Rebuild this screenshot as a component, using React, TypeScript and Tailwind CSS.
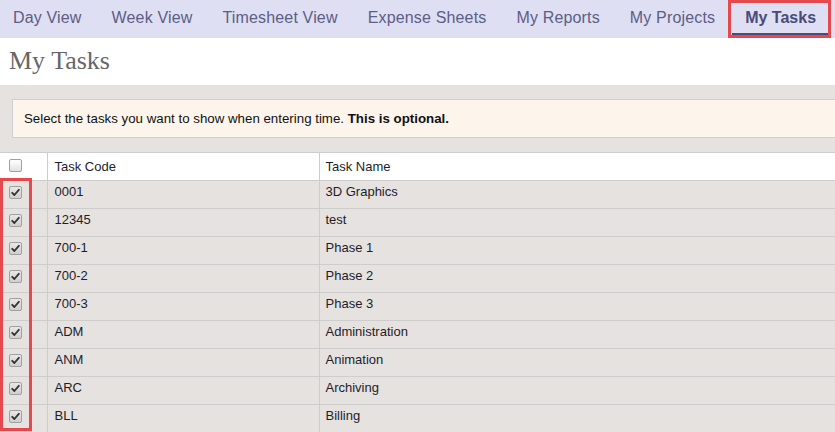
import React from 'react';

const tabs = ['Day View', 'Week View', 'Timesheet View', 'Expense Sheets', 'My Reports', 'My Projects', 'My Tasks'];

const tasks = [
  { code: '0001', name: '3D Graphics' },
  { code: '12345', name: 'test' },
  { code: '700-1', name: 'Phase 1' },
  { code: '700-2', name: 'Phase 2' },
  { code: '700-3', name: 'Phase 3' },
  { code: 'ADM', name: 'Administration' },
  { code: 'ANM', name: 'Animation' },
  { code: 'ARC', name: 'Archiving' },
  { code: 'BLL', name: 'Billing' },
];

function Checkbox({ checked }: { checked: boolean }) {
  return (
    <span
      className={
        'flex h-[13px] w-[13px] items-center justify-center rounded-[2px] border border-[#a0a0a0] ' +
        (checked ? 'bg-gradient-to-b from-[#e8e8e8] to-[#cfcfcf]' : 'bg-gradient-to-b from-[#ffffff] to-[#e2e2e2]')
      }
    >
      {checked && (
        <svg width="9" height="9" viewBox="0 0 9 9">
          <path d="M1.2 4.8 L3.4 7 L7.8 1.8" fill="none" stroke="#333" strokeWidth="1.8" strokeLinecap="round" strokeLinejoin="round" />
        </svg>
      )}
    </span>
  );
}

export default function App() {
  return (
    <div className="relative h-[432px] w-[835px] overflow-hidden bg-[#e6e2df] font-['Liberation_Sans',Arial,sans-serif]">
      {/* top nav */}
      <div className="flex h-[38px] items-stretch bg-[#dedff2] text-[16px] tracking-[0.16px] text-[#5d5d86]">
        <div className="-ml-[2px] flex whitespace-nowrap">
          {tabs.map((t) => {
            const active = t === 'My Tasks';
            return (
              <div
                key={t}
                className={
                  'relative flex shrink-0 items-center pb-[2px] ' +
                  (active ? 'ml-[2px] px-[13px] font-bold tracking-[0px] text-[#4b4a78]' : 'px-[15px]')
                }
              >
                {t}
                {active && (
                  <>
                    <span className="absolute bottom-[2px] left-0 right-0 h-[3px] bg-[#4b4a78]" />
                    <span className="absolute -left-[4px] -right-[2px] top-0 bottom-0 border-[3px] border-[#e5484d]" />
                  </>
                )}
              </div>
            );
          })}
        </div>
      </div>

      {/* title */}
      <div className="flex h-[47px] items-center bg-white pl-[9px] pb-[2px]">
        <h1 className="font-['Liberation_Serif','DejaVu_Serif',serif] text-[26px] text-[#666]">My Tasks</h1>
      </div>

      {/* notice */}
      <div className="pl-[12px] pt-[14px]">
        <div className="flex h-[39px] w-[860px] items-center border border-[#cfcfcf] bg-[#fdf5eb] pl-[11px] text-[13.3px] text-[#111]">
          Select the tasks you want to show when entering time.&nbsp;<b>This is optional.</b>
        </div>
      </div>

      {/* table */}
      <table className="mt-[14px] w-[835px] table-fixed border-collapse text-[13px] leading-[16px] text-[#1d1d2b]">
        <colgroup>
          <col className="w-[47px]" />
          <col className="w-[272px]" />
          <col />
        </colgroup>
        <thead>
          <tr className="h-[28px] border-y border-[#cdcdcd] bg-white">
            <th className="border-r border-[#cdcdcd] pl-[9px] pb-[2px] align-middle">
              <Checkbox checked={false} />
            </th>
            <th className="border-r border-[#cdcdcd] pl-[7px] text-left font-normal">Task Code</th>
            <th className="pl-[6px] text-left font-normal">Task Name</th>
          </tr>
        </thead>
        <tbody>
          {tasks.map((task) => (
            <tr key={task.code} className="h-[28px] border-b border-[#cdcdcd]">
              <td className="border-r border-[#cdcdcd] pl-[9px] pt-[5px] align-top">
                <Checkbox checked />
              </td>
              <td className="border-r border-[#cdcdcd] pl-[7px] pt-[3px] align-top">{task.code}</td>
              <td className="pl-[6px] pt-[3px] align-top">{task.name}</td>
            </tr>
          ))}
        </tbody>
      </table>

      {/* annotation box around checkboxes */}
      <div className="absolute left-0 top-[178px] h-[253px] w-[32px] border-[3px] border-[#e5484d]" />
    </div>
  );
}
